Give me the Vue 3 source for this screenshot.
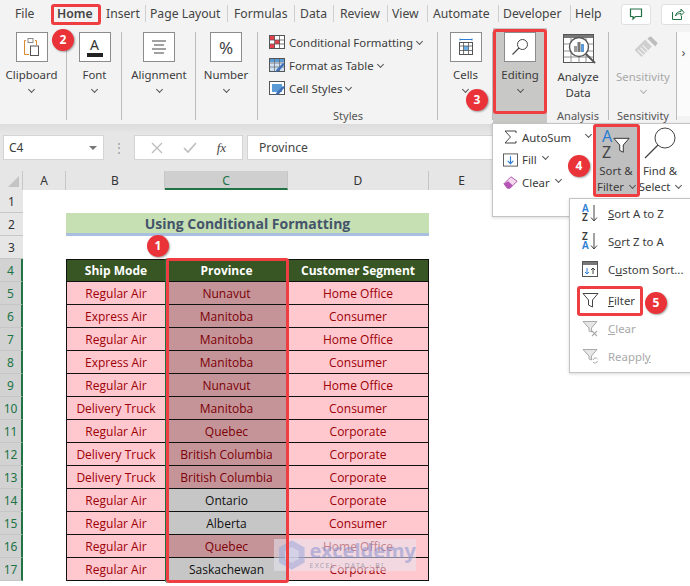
<script setup>
const tabs = [
  { t: 'File', w: 48, p: 15 }, { t: 'Home', w: 54, p: 9, active: true }, { t: 'Insert', w: 44, p: 4 }, { t: 'Page Layout', w: 82, p: 4 },
  { t: 'Formulas', w: 67, p: 6 }, { t: 'Data', w: 39, p: 5 }, { t: 'Review', w: 54, p: 6 }, { t: 'View', w: 40, p: 4 },
  { t: 'Automate', w: 71, p: 5 }, { t: 'Developer', w: 72, p: 4 }, { t: 'Help', w: 36, p: 4 }
]
const colHeads = [
  { t: 'A', w: 43 }, { t: 'B', w: 99 }, { t: 'C', w: 123, sel: true }, { t: 'D', w: 141 }, { t: 'E', w: 66 }, { t: '', w: 195 }
]
const rows = [
  ['Regular Air', 'Nunavut', 'Home Office', 'd'],
  ['Express Air', 'Manitoba', 'Consumer', 'd'],
  ['Regular Air', 'Manitoba', 'Home Office', 'd'],
  ['Express Air', 'Manitoba', 'Consumer', 'd'],
  ['Regular Air', 'Nunavut', 'Home Office', 'd'],
  ['Delivery Truck', 'Manitoba', 'Consumer', 'd'],
  ['Regular Air', 'Quebec', 'Corporate', 'd'],
  ['Delivery Truck', 'British Columbia', 'Corporate', 'd'],
  ['Delivery Truck', 'British Columbia', 'Corporate', 'd'],
  ['Regular Air', 'Ontario', 'Corporate', 'g'],
  ['Regular Air', 'Alberta', 'Consumer', 'g'],
  ['Regular Air', 'Quebec', 'Home Office', 'd'],
  ['Regular Air', 'Saskachewan', 'Corporate', 'g']
]
const badges = [
  { n: 1, x: 147, y: 235 }, { n: 2, x: 52, y: 29 }, { n: 3, x: 466, y: 89 }, { n: 4, x: 568, y: 155 }, { n: 5, x: 645, y: 292 }
]
</script>

<template>
  <div class="page">
    <div class="tabbar">
      <div v-for="(tab, i) in tabs" :key="tab.t" class="tab" :class="{ sep: i > 1 && i < 10, on: tab.active }" :style="{ width: tab.w + 'px', paddingLeft: tab.p + 'px' }">{{ tab.t }}</div>
      <div class="tabtools">
        <div class="toolbtn">
          <svg width="14" height="14" viewBox="0 0 14 14"><path d="M1.5 2h11v7.500H6.500L4 12V9.500H1.500z" fill="none" stroke="#217346" stroke-width="1.200"/></svg>
        </div>
        <div class="toolbtn wide">
          <svg width="14" height="14" viewBox="0 0 14 14"><path d="M1.500 5v7.500h9V9M4.500 9c.3-3 2.500-4.500 5.500-4.500V2L13 5.500 10 8.500V6.500C7.500 6.500 5.500 7 4.500 9z" fill="none" stroke="#217346" stroke-width="1"/></svg>
        </div>
      </div>
    </div>

    <div class="ribbon">
      <div class="grp first" style="width:67px">
        <div class="bigicon">
          <svg width="18" height="20" viewBox="0 0 18 20"><path d="M3 3.500H1.500v14H6M12 3.500h1.500V8" fill="none" stroke="#d98a2b"/><rect x="5" y="1.500" width="5" height="4" fill="none" stroke="#8a8a8a"/><rect x="7.500" y="9" width="8" height="9.500" fill="#fff" stroke="#555"/></svg>
        </div>
        <div class="glabel">Clipboard</div>
        <span class="chev"></span>
      </div>
      <div class="grp" style="width:55px">
        <div class="bigicon col">
          <span class="fonta">A</span><span class="fontbar"></span>
        </div>
        <div class="glabel">Font</div>
        <span class="chev"></span>
      </div>
      <div class="grp" style="width:74px">
        <div class="bigicon">
          <svg width="16" height="16" viewBox="0 0 16 16"><path d="M1 2h14M3 6h10M1 10h14M3 14h10" stroke="#444" stroke-width="1"/></svg>
        </div>
        <div class="glabel">Alignment</div>
        <span class="chev"></span>
      </div>
      <div class="grp num" style="width:62px">
        <div class="bigicon pct">%</div>
        <div class="glabel">Number</div>
        <span class="chev"></span>
      </div>
      <div class="grp styles" style="width:180px">
        <div class="styleline">
          <svg width="16" height="15" viewBox="0 0 16 15"><rect x=".5" y=".5" width="15" height="13" fill="#fff" stroke="#555"/><path d="M1 1h5v4H1zM6 5h5v4H6zM1 9h5v4H1z" fill="#e8404a"/><path d="M5.500 1v12M10.500 1v12M1 5h14M1 9h14" stroke="#555" stroke-width=".8"/></svg>
          <span>Conditional Formatting</span><span class="minichev"></span>
        </div>
        <div class="styleline">
          <svg width="16" height="15" viewBox="0 0 16 15"><rect x=".5" y=".5" width="15" height="13" fill="#cfe2f5" stroke="#555"/><path d="M1 1h14v3H1z" fill="#5b9bd5"/><path d="M5.500 1v12M10.500 1v12M1 5h14M1 9h14" stroke="#666" stroke-width=".7"/><path d="M6 14l2-3 6-6 2 1-6 7z" fill="#3f6fb5"/></svg>
          <span>Format as Table</span><span class="minichev"></span>
        </div>
        <div class="styleline">
          <svg width="16" height="15" viewBox="0 0 16 15"><rect x=".5" y=".5" width="15" height="13" fill="#fff" stroke="#555"/><rect x="3" y="3" width="10" height="8" fill="#5b9bd5"/><path d="M6 14l2-3 6-6 2 1-6 7z" fill="#3f6fb5"/></svg>
          <span>Cell Styles</span><span class="minichev"></span>
        </div>
        <div class="gname stylesname">Styles</div>
      </div>
      <div class="grp" style="width:55px">
        <div class="bigicon">
          <svg width="18" height="18" viewBox="0 0 18 18"><path d="M3 1.500h12M3 .5v2M15 .5v2" stroke="#2b7cd3"/><rect x="2.500" y="4.500" width="13" height="12" fill="#fff" stroke="#555"/><rect x="6.500" y="8" width="5" height="4.500" fill="#6aaee8"/><path d="M2.500 8h13M2.500 12.500h13M6.500 4.500v12M11.500 4.500v12" stroke="#555" stroke-width=".8"/></svg>
        </div>
        <div class="glabel">Cells</div>
        <span class="chev"></span>
      </div>
      <div class="grp editing" style="width:54px">
        <div class="bigicon">
          <svg width="18" height="18" viewBox="0 0 18 18"><circle cx="11.500" cy="6.500" r="5" fill="none" stroke="#444"/><path d="M8 10l-6.500 6.500" stroke="#444" stroke-width="1.100"/></svg>
        </div>
        <div class="glabel">Editing</div>
        <span class="chev"></span>
      </div>
      <div class="grp analyze" style="width:62px">
        <svg class="analyzeicon" width="34" height="32" viewBox="0 0 34 32">
          <rect x=".5" y=".5" width="30" height="28" fill="#fff" stroke="#555"/><rect x="1" y="1" width="29" height="3" fill="#777"/>
          <path d="M1 10h29M1 17h29M1 23h29M8 4v25M16 4v25M23 4v25" stroke="#777" stroke-width=".8"/>
          <circle cx="16" cy="13" r="9.500" fill="#fff" stroke="#555" stroke-width="1.400"/>
          <rect x="11" y="12" width="3" height="6" fill="#9a9a9a"/><rect x="14.500" y="8" width="3" height="10" fill="#777"/><rect x="18" y="10" width="3" height="8" fill="#5b9bd5"/>
          <path d="M23 20l9 9" stroke="#555" stroke-width="2"/>
        </svg>
        <div class="alabel">Analyze<br>Data</div>
        <div class="gname">Analysis</div>
      </div>
      <div class="grp sens" style="width:68px">
        <div class="bigicon muted">
          <svg class="sensicon" width="28" height="30" viewBox="0 0 24 26"><path d="M3 13l9-9 6 6-9 9z" fill="#cfcfcf"/><path d="M14 3l3-2 6 6-2 3z" fill="#bdbdbd"/><path d="M6 13l6 6M8 11l6 6M10 9l6 6" stroke="#f1f1f1"/></svg>
        </div>
        <div class="glabel dim">Sensitivity</div>
        <span class="chev dimchev"></span>
        <div class="gname">Sensitivity</div>
      </div>
      <div class="scroller">›</div>
    </div>

    <div class="shade"></div>

    <div class="fbar">
      <div class="namebox"><span>C4</span><i class="tri"></i></div>
      <div class="dots">⋮</div>
      <div class="fbtns">
        <svg width="12" height="12" viewBox="0 0 12 12"><path d="M1 1l10 10M11 1L1 11" stroke="#bdbdbd" stroke-width="1.300"/></svg>
        <svg width="14" height="12" viewBox="0 0 14 12"><path d="M1 6l4 4 8-9" fill="none" stroke="#bdbdbd" stroke-width="1.600"/></svg>
        <span class="fx">fx</span>
      </div>
      <div class="finput">Province</div>
    </div>

    <div class="colheads">
      <div class="corner"><i></i></div>
      <div v-for="c in colHeads" :key="c.t + c.w" class="colhead" :class="{ sel: c.sel }" :style="{ width: c.w + 'px' }">{{ c.t }}</div>
    </div>

    <div class="sheet">
      <div class="rownums">
        <div v-for="n in 17" :key="n" class="rownum" :class="{ rsel: n >= 4 }">{{ n }}</div>
      </div>
      <div class="cells">
        <div class="blank"></div>
        <div class="title">Using Conditional Formatting</div>
        <div class="blank"></div>
        <div class="trow head">
          <div class="c b">Ship Mode</div><div class="c m">Province</div><div class="c d">Customer Segment</div>
        </div>
        <div v-for="(r, i) in rows" :key="i" class="trow">
          <div class="c b pink">{{ r[0] }}</div>
          <div class="c m" :class="r[3] === 'd' ? 'dup' : 'grey'">{{ r[1] }}</div>
          <div class="c d pink">{{ r[2] }}</div>
        </div>
      </div>
    </div>

    <div class="wm">
      <svg width="30" height="32" viewBox="0 0 30 32"><path d="M15 1l13 7.500v15L15 31 2 23.500v-15z" fill="#9aa8d8" opacity=".55"/><path d="M8 12l7-4 7 4v8l-7 4-7-4z" fill="#e8e8f4" opacity=".5"/></svg>
      <div class="wmtext"><div class="wmname">exceldemy</div><div class="wmsub">EXCEL · DATA · BI</div></div>
    </div>

    <div class="panel1">
      <div class="p1col">
        <div class="p1line">
          <svg width="15" height="14" viewBox="0 0 14 14"><path d="M12.500 3V1H1.500l5.500 6-5.500 6h11v-2" fill="none" stroke="#444"/></svg>
          <span>AutoSum</span><span class="minichev sumchev"></span>
        </div>
        <div class="p1line">
          <svg width="15" height="14" viewBox="0 0 16 14"><rect x=".5" y=".5" width="15" height="13" fill="#fff" stroke="#555"/><path d="M8 3v8M5 8l3 3 3-3" fill="none" stroke="#2b7cd3" stroke-width="1.200"/></svg>
          <span>Fill</span><span class="minichev"></span>
        </div>
        <div class="p1line">
          <svg width="15" height="15" viewBox="0 0 17 15"><path d="M1 9l8-8 7 5-8 8H5z" fill="#f4d9ee" stroke="#a349a4"/><path d="M1 9l4 5h3l3-3-5-5z" fill="#b455b6"/></svg>
          <span>Clear</span><span class="minichev"></span>
        </div>
      </div>
      <div class="sortbtn">
        <div class="azf">
          <div class="az"><span class="a">A</span><span class="z">Z</span></div>
          <svg class="ff" width="17" height="17" viewBox="0 0 19 19"><path d="M1 1.500h17L11.500 9v8l-4-2V9z" fill="#fff" stroke="#333" stroke-width="1.100"/></svg>
        </div>
        <div class="sflabel">Sort &amp;<br>Filter <span class="minichev"></span></div>
      </div>
      <div class="findbtn">
        <svg width="34" height="32" viewBox="0 0 34 32"><circle cx="22" cy="11" r="10" fill="#fff" stroke="#444"/><path d="M15 18L2 31" stroke="#444" stroke-width="1.200"/></svg>
        <div class="sflabel findlabel">Find &amp;<br>Select <span class="minichev"></span></div>
      </div>
    </div>

    <div class="panel2">
      <div class="mi">
        <div class="mico"><div class="azs"><span class="a">A</span><span>Z</span></div><svg width="8" height="18" viewBox="0 0 8 18"><path d="M4 1v16M1 13.500L4 17l3-3.500" fill="none" stroke="#444"/></svg></div>
        <span><u>S</u>ort A to Z</span>
      </div>
      <div class="mi">
        <div class="mico"><div class="azs"><span>Z</span><span class="a">A</span></div><svg width="8" height="18" viewBox="0 0 8 18"><path d="M4 1v16M1 13.500L4 17l3-3.500" fill="none" stroke="#444"/></svg></div>
        <span>S<u>o</u>rt Z to A</span>
      </div>
      <div class="mi">
        <div class="mico"><svg width="16" height="16" viewBox="0 0 16 16"><rect x=".5" y=".5" width="15" height="15" fill="#fff" stroke="#555"/><rect x="1" y="1" width="14" height="3" fill="#777"/><path d="M5 7v6M3 11l2 2 2-2" fill="none" stroke="#2b7cd3"/><path d="M11 13V7M9 9l2-2 2 2" fill="none" stroke="#444"/></svg></div>
        <span>C<u>u</u>stom Sort...</span>
      </div>
      <div class="mi filter">
        <div class="mico"><svg width="17" height="17" viewBox="0 0 17 17"><path d="M1 1.500h15l-5.500 6.500v7l-4-2V8z" fill="#fff" stroke="#444"/></svg></div>
        <span><u>F</u>ilter</span>
      </div>
      <div class="mi off">
        <div class="mico"><svg width="17" height="17" viewBox="0 0 17 17"><path d="M1 1.500h14L9.500 8v4L7 11V8z" fill="#e6e6e6" stroke="#aaa"/><path d="M10 11l5 5M15 11l-5 5" stroke="#aaa" stroke-width="1.100"/></svg></div>
        <span><u>C</u>lear</span>
      </div>
      <div class="mi off">
        <div class="mico"><svg width="17" height="17" viewBox="0 0 17 17"><path d="M1 1.500h14L9.500 8v4L7 11V8z" fill="#e6e6e6" stroke="#aaa"/><path d="M11 12a2.500 2.500 0 0 1 4.500-1M15.500 13a2.500 2.500 0 0 1-4.500 1" fill="none" stroke="#aaa"/></svg></div>
        <span>Reappl<u>y</u></span>
      </div>
    </div>

    <div class="mark m-home"></div>
    <div class="mark m-edit"></div>
    <div class="mark m-sort"></div>
    <div class="mark m-filter"></div>
    <div class="mark m-col"></div>

    <div v-for="b in badges" :key="b.n" class="badge" :style="{ left: b.x + 'px', top: b.y + 'px' }">{{ b.n }}</div>
  </div>
</template>

<style>
html, body { margin: 0; padding: 0; background: #fff; }
</style>

<style scoped>
.page { position: relative; width: 690px; height: 586px; overflow: hidden; font-family: "Noto Sans", "Open Sans", sans-serif; font-size: 11.400px; color: #3b3b3b; background: #fff; }
.tabbar { display: flex; height: 28px; background: #f3f3f3; align-items: center; }
.tab { position: relative; text-align: left; box-sizing: border-box; white-space: nowrap; font-size: 12.200px; line-height: 28px; color: #444; flex: none; }
.tab.on { font-weight: 600; }
.tab.sep::after { content: ""; position: absolute; right: 0; top: 5px; height: 17px; width: 1px; background: #cfcfcf; }
.tabtools { display: flex; gap: 10px; margin-left: 14px; }
.toolbtn { width: 30px; height: 21px; background: #fff; border: 1px solid #e0e0e0; border-radius: 3px; display: flex; align-items: center; justify-content: center; box-sizing: border-box; flex: none; }
.toolbtn.wide { width: 34px; }
.ribbon { display: flex; height: 96px; background: #f3f3f3; }
.grp { position: relative; flex: none; box-sizing: border-box; display: flex; flex-direction: column; align-items: center; padding-top: 4px; }
.grp.first { padding-right: 4px; }
.grp.num { padding-right: 2px; }
.grp::after { content: ""; position: absolute; right: 0; top: 4px; bottom: 4px; width: 1px; background: #bcbcbc; }
.bigicon { width: 32px; height: 30px; background: #fff; border: 1px solid #8c8c8c; box-sizing: border-box; display: flex; align-items: center; justify-content: center; flex: none; }
.bigicon.muted { background: transparent; border: 0; }
.bigicon.col { flex-direction: column; }
.fonta { font-size: 14px; line-height: 14px; color: #333; }
.fontbar { width: 16px; height: 4px; background: #222; margin-top: 1px; }
.pct { font-size: 17px; color: #444; }
.glabel { font-size: 11.400px; line-height: 16px; margin-top: 5px; white-space: nowrap; }
.glabel.dim { color: #a8a8a8; }
.chev, .minichev { display: inline-block; width: 4px; height: 4px; border-right: 1px solid #555; border-bottom: 1px solid #555; transform: rotate(45deg); }
.chev { margin-top: 4px; }
.dimchev { border-color: #b0b0b0; }
.minichev { margin-left: 2px; position: relative; top: -3px; }
.gname { position: absolute; bottom: 0; left: 0; right: 0; text-align: center; font-size: 11px; line-height: 16px; color: #555; }
.styles { align-items: flex-start; padding-left: 11px; padding-top: 3px; }
.styleline { display: flex; align-items: center; gap: 4px; height: 23px; white-space: nowrap; }
.styleline .minichev { margin-left: 0; top: -1px; }
.editing { background: #c8c8c6; }
.editing::after { display: none; }
.alabel { font-size: 11.400px; line-height: 16px; text-align: center; margin-top: 3px; }
.analyzeicon { margin-top: 2px; margin-left: 4px; }
.sens .bigicon { margin-top: 3px; }
.sensicon { margin-left: 4px; }
.sens .glabel { margin-top: 4px; }
.sens .chev { margin-top: 3px; }
.scroller { flex: 1; background: #fbfbfb; margin: 4px 0; text-align: center; font-size: 13px; line-height: 40px; height: 84px; color: #555; }
.shade { height: 11px; background: linear-gradient(#dcdcdc, #e8e8e8); }
.fbar { display: flex; height: 36px; background: #e6e6e6; align-items: flex-start; }
.namebox { width: 101px; height: 25px; margin-left: 3px; background: #fff; border: 1px solid #d4d4d4; box-sizing: border-box; display: flex; align-items: center; justify-content: space-between; padding: 0 6px 0 5px; font-size: 12px; }
.tri { width: 0; height: 0; border-left: 4px solid transparent; border-right: 4px solid transparent; border-top: 4px solid #777; }
.dots { width: 30px; height: 25px; text-align: center; font-size: 12px; line-height: 25px; color: #999; flex: none; }
.fbtns { width: 109px; height: 25px; margin-left: 0; background: #fff; border: 1px solid #d4d4d4; box-sizing: border-box; display: flex; align-items: center; justify-content: space-around; padding: 0 6px; flex: none; }
.fx { font-family: "Liberation Serif", serif; font-style: italic; font-size: 13px; color: #444; }
.finput { flex: 1; height: 25px; margin-left: 4px; background: #fff; border: 1px solid #d4d4d4; border-right: 0; box-sizing: border-box; padding-left: 11px; line-height: 24px; font-size: 12.200px; color: #444; }
.colheads { display: flex; height: 19px; background: #e6e6e6; }
.corner { width: 23px; flex: none; position: relative; border-right: 1px solid #c6c6c6; box-sizing: border-box; }
.corner i { position: absolute; right: 3px; bottom: 3px; width: 0; height: 0; border-left: 11px solid transparent; border-bottom: 11px solid #c4c4c4; }
.colhead { flex: none; box-sizing: border-box; border-right: 1px solid #c6c6c6; text-align: center; font-size: 12px; line-height: 19px; color: #333; }
.colhead:last-child { border-right: 0; background: #fff; }
.colhead.sel { background: #cfcfcf; border-bottom: 2px solid #217346; color: #217346; }
.sheet { display: flex; }
.rownums { width: 23px; flex: none; background: #e6e6e6; }
.rownum { height: 23px; box-sizing: border-box; border-bottom: 1px solid #c6c6c6; text-align: center; line-height: 24px; font-size: 12px; color: #333; }
.rownum.rsel { background: #d2d2d2; color: #217346; border-right: 2px solid #217346; }
.cells { padding-left: 43px; font-family: "Open Sans", "Noto Sans", sans-serif; }
.blank { height: 23px; }
.title { width: 363px; height: 23px; box-sizing: border-box; background: #c6e0b4; border-bottom: 3px solid #a9bfe0; text-align: center; font-weight: 700; font-size: 14px; line-height: 21px; color: #44546a; }
.trow { display: flex; height: 23px; width: 363px; box-sizing: border-box; border-left: 1px solid #111; border-right: 1px solid #111; border-bottom: 1px solid #111; }
.trow.head { background: #375623; border-top: 1px solid #111; color: #fff; font-weight: 700; }
.c { flex: none; text-align: center; font-size: 12px; line-height: 24px; height: 22px; white-space: nowrap; border-right: 1px solid #111; box-sizing: border-box; }
.head .c { line-height: 21px; height: 21px; }
.b { width: 99px; }
.m { width: 122px; }
.d { width: 140px; border-right: 0; }
.pink { background: #ffc7ce; color: #9c0006; }
.dup { background: #c49499; color: #7c0005; }
.grey { background: #c6c6c6; color: #111; }
.wm { position: absolute; left: 274px; top: 539px; width: 142px; height: 32px; background: rgba(230, 230, 240, .55); display: flex; gap: 3px; padding-left: 3px; box-sizing: border-box; }
.wmname { font-size: 20px; line-height: 23px; font-weight: 700; color: rgba(130, 140, 205, .5); }
.wmsub { font-size: 7px; line-height: 8px; letter-spacing: 1.200px; color: rgba(120, 120, 140, .6); }
.panel1 { position: absolute; left: 492px; top: 123px; width: 200px; height: 94px; background: #fff; border: 1px solid #c4c4c4; box-sizing: border-box; box-shadow: 0 1px 3px rgba(0,0,0,.15); display: flex; }
.p1col { width: 101px; flex: none; padding: 2px 0 0 10px; box-sizing: border-box; }
.p1line { display: flex; align-items: center; gap: 4px; height: 22.500px; white-space: nowrap; }
.sumchev { margin-left: 11px; }
.sortbtn { width: 44px; height: 72px; background: #bfbfbf; display: flex; flex-direction: column; align-items: center; flex: none; }
.azf { display: flex; align-items: flex-start; height: 34px; padding-top: 4px; box-sizing: content-box; }
.az { display: flex; flex-direction: column; font-size: 16px; line-height: 16px; margin-right: 1px; color: #444; }
.ff { margin-top: 9px; }
.az .a, .azs .a { color: #2b7cd3; }
.sflabel { font-size: 11.400px; line-height: 16px; text-align: center; white-space: nowrap; margin-top: 1px; }
.findlabel { margin-top: 4px; }
.sflabel .minichev { margin-left: 3px; }
.findbtn { width: 44px; display: flex; flex-direction: column; align-items: center; flex: none; padding-top: 3px; box-sizing: border-box; }
.panel2 { position: absolute; left: 569px; top: 198px; width: 125px; height: 175px; background: #fff; border: 1px solid #c4c4c4; box-sizing: border-box; box-shadow: 0 1px 3px rgba(0,0,0,.15); padding-top: 0; }
.mi { display: flex; align-items: center; height: 28px; white-space: nowrap; font-size: 11.400px; gap: 7px; padding-left: 12px; }
.mi.filter { margin-top: 3px; }
.mi.off { color: #a8a8a8; }
.mico { width: 19px; height: 18px; display: flex; align-items: center; gap: 1px; flex: none; }
.azs { display: flex; flex-direction: column; font-size: 10px; line-height: 9px; font-weight: 600; }
.mark { position: absolute; box-sizing: border-box; border: 3px solid #ef3e42; border-radius: 3px; pointer-events: none; }
.m-home { left: 51px; top: 4px; width: 50px; height: 21px; }
.m-edit { left: 493px; top: 29px; width: 54px; height: 85px; }
.m-sort { left: 593px; top: 124px; width: 47px; height: 73px; }
.m-filter { left: 577px; top: 286px; width: 66px; height: 30px; }
.m-col { left: 166px; top: 258px; width: 123px; height: 325px; box-shadow: -1px 0 0 #217346; }
.badge { position: absolute; width: 22px; height: 22px; border-radius: 50%; background: #e93338; color: #fff; font-weight: 700; font-size: 12px; line-height: 22px; text-align: center; box-shadow: 1px 1px 2px rgba(0,0,0,.35); }
</style>
